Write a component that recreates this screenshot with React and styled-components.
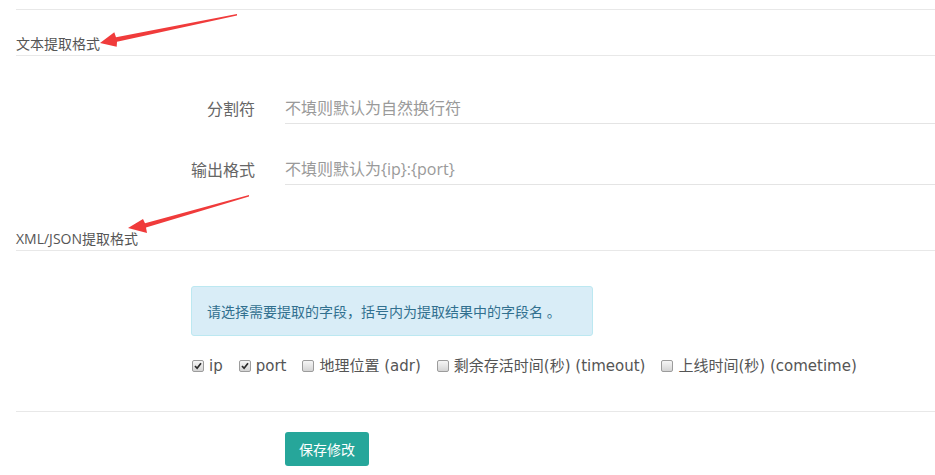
import React, { useState } from 'react';
import styled, { createGlobalStyle } from 'styled-components';

const GlobalStyle = createGlobalStyle`
  html, body {
    margin: 0;
    padding: 0;
    background: #fff;
  }
  body {
    font-family: "Open Sans", "Noto Sans CJK SC", sans-serif;
    color: #555;
  }
`;

const Page = styled.div`
  position: relative;
  width: 935px;
  height: 475px;
  overflow: hidden;
  padding-left: 16px;
  box-sizing: border-box;
`;

const Rule = styled.div`
  height: 1px;
  background: #e8e8e8;
  margin-top: ${(p) => p.$top || 0}px;
`;

const SectionTitle = styled.div`
  margin-top: ${(p) => p.$top || 0}px;
  padding: 24px 0 1px;
  font-size: 14px;
  line-height: 20px;
  color: #555;
  border-bottom: 1px solid #e8e8e8;
`;

const FormRow = styled.div`
  display: flex;
  align-items: center;
  margin-top: ${(p) => p.$top || 0}px;
`;

const Label = styled.label`
  width: 239px;
  text-align: right;
  font-size: 16px;
  color: #666;
  padding-right: 30px;
  flex: none;
  line-height: 30px;
  padding-top: 2px;
`;

const TextInput = styled.input`
  flex: 1;
  height: 31px;
  box-sizing: border-box;
  border: none;
  border-bottom: 1px solid #e4e4e4;
  outline: none;
  padding: 0;
  font-family: inherit;
  font-size: 16px;
  color: #555;
  background: transparent;
  &::placeholder {
    color: #9a9a9a;
  }
`;

const Indent = styled.div`
  margin-left: 176px;
  margin-top: ${(p) => p.$top || 0}px;
`;

const Alert = styled.div`
  margin-left: -1px;
  width: 402px;
  height: 50px;
  box-sizing: border-box;
  padding: 0 15px;
  display: flex;
  align-items: center;
  background: #d9edf7;
  border: 1px solid #bce8f1;
  border-radius: 3px;
  color: #31708f;
  font-size: 14px;
`;

const CheckList = styled.div`
  display: flex;
  align-items: center;
  gap: 16px;
  font-family: "DejaVu Sans", "Noto Sans CJK SC", sans-serif;
  font-size: 15px;
  line-height: 20px;
  color: #555;
`;

const CheckItem = styled.label`
  display: flex;
  align-items: center;
  gap: 5px;
  cursor: pointer;
`;

const Box = styled.span`
  width: 10px;
  height: 10px;
  flex: none;
  border: 1px solid #9c9c9c;
  border-radius: 2px;
  background: linear-gradient(#f6f6f6, #d4d4d4);
  display: flex;
  align-items: center;
  justify-content: center;
`;

const ButtonRow = styled.div`
  margin-top: 20px;
  padding-left: 269px;
`;

const SaveButton = styled.button`
  width: 84px;
  height: 34px;
  border: none;
  border-radius: 3px;
  background: #26a69a;
  color: #fff;
  font-family: inherit;
  font-size: 14px;
  cursor: pointer;
`;

const Overlay = styled.svg`
  position: absolute;
  top: 0;
  left: 0;
  pointer-events: none;
`;

function Check({ label, checked, onToggle }) {
  return (
    <CheckItem onClick={onToggle}>
      <Box>
        {checked && (
          <svg width="8" height="8" viewBox="0 0 8 8">
            <path d="M1 4 L3.1 6.3 L7 1.2" fill="none" stroke="#2b2b2b" strokeWidth="1.7" />
          </svg>
        )}
      </Box>
      {label}
    </CheckItem>
  );
}

const fields = [
  { key: 'ip', label: 'ip', on: true },
  { key: 'port', label: 'port', on: true },
  { key: 'adr', label: '地理位置 (adr)', on: false },
  { key: 'timeout', label: '剩余存活时间(秒) (timeout)', on: false },
  { key: 'cometime', label: '上线时间(秒) (cometime)', on: false },
];

export default function App() {
  const [checked, setChecked] = useState(
    Object.fromEntries(fields.map((f) => [f.key, f.on]))
  );
  const toggle = (k) => setChecked({ ...checked, [k]: !checked[k] });

  return (
    <Page>
      <GlobalStyle />
      <Rule $top={9} />
      <SectionTitle>文本提取格式</SectionTitle>

      <FormRow $top={36}>
        <Label>分割符</Label>
        <TextInput placeholder="不填则默认为自然换行符" />
      </FormRow>
      <FormRow $top={29}>
        <Label>输出格式</Label>
        <TextInput placeholder="不填则默认为{ip}:{port}" />
      </FormRow>

      <SectionTitle $top={20}>XML/JSON提取格式</SectionTitle>

      <Indent $top={35}>
        <Alert>请选择需要提取的字段，括号内为提取结果中的字段名 。</Alert>
      </Indent>
      <Indent $top={20}>
        <CheckList>
          {fields.map((f) => (
            <Check key={f.key} label={f.label} checked={checked[f.key]} onToggle={() => toggle(f.key)} />
          ))}
        </CheckList>
      </Indent>

      <Rule $top={35} />
      <ButtonRow>
        <SaveButton>保存修改</SaveButton>
      </ButtonRow>

      <Overlay width="935" height="475">
        <polygon
          points="237,14 116,37.3 114.3,32.3 100,43 116.7,46.7 117,41.8 237,15.4"
          fill="#f03b3b"
        />
        <polygon
          points="249,195 145,223.2 143,219 128,228 147,233 146,227.6 249,196.4"
          fill="#f03b3b"
        />
      </Overlay>
    </Page>
  );
}
